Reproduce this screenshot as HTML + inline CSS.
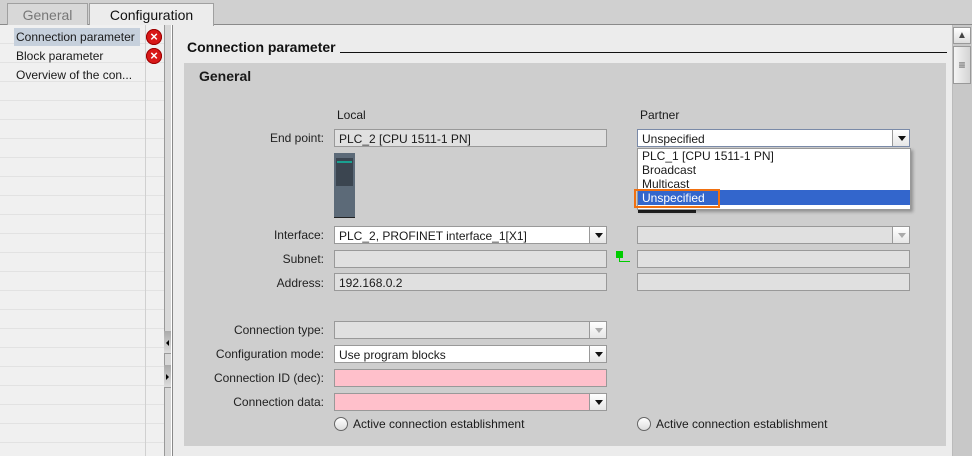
<!DOCTYPE html>
<html><head><style>
*{margin:0;padding:0;box-sizing:border-box}
body{width:972px;height:456px;overflow:hidden;background:#ececec;font-family:"Liberation Sans",sans-serif;font-size:12px;color:#1a1a1a;position:relative}
.a{position:absolute}
.tabbar{left:0;top:0;width:972px;height:25px;background:#d0d0d0;border-bottom:1px solid #8a8a8a}
.tab{top:3px;height:22px;border:1px solid #a0a0a0;border-bottom:none;font-size:14px;padding-top:3px;text-align:center}
.nav{left:0;top:25px;width:164px;height:431px;background:repeating-linear-gradient(#f0f0f0 0 18px,#e2e2e2 18px 19px);}
.lbl{text-align:right;font-size:12px;color:#222}
.box{height:18px;border:1px solid #999;background:#e0e0e0;padding:2px 4px;font-size:12px;white-space:nowrap;overflow:hidden}
.w{background:#fff}
.pink{background:#ffc0cb}
.dd{position:absolute;right:0;top:0;width:17px;height:16px;border-left:1px solid #999;background:linear-gradient(#fff,#e6e6e6)}
.dd:after{content:"";position:absolute;left:5px;top:6px;border-left:4px solid transparent;border-right:4px solid transparent;border-top:5px solid #111}
.dd.g:after{border-top-color:#aaa}
.x{width:16px;height:16px;border-radius:50%;background:#d81818;color:#fff;font-weight:bold;font-size:13px;line-height:16px;text-align:center;box-shadow:inset 0 0 0 1px #900}
.radio{width:14px;height:14px;border-radius:50%;border:1px solid #666;background:linear-gradient(#fff,#ddd)}
</style></head><body>
<div class="a tabbar"></div>
<div class="a tab" style="left:7px;width:81px;background:#d8d8d8;color:#777">General</div>
<div class="a tab" style="left:89px;width:125px;background:#ececec;color:#111;height:23px">Configuration</div>

<div class="a nav"></div>
<div class="a" style="left:145px;top:25px;width:1px;height:431px;background:#d0d0d0"></div>
<div class="a" style="left:14px;top:28px;width:126px;height:18px;background:#c6d0dc"></div>
<div class="a" style="left:16px;top:30px">Connection parameter</div>
<div class="a" style="left:16px;top:49px">Block parameter</div>
<div class="a" style="left:16px;top:68px">Overview of the con...</div>
<div class="a x" style="left:146px;top:29px">×</div>
<div class="a x" style="left:146px;top:48px">×</div>

<div class="a" style="left:164px;top:25px;width:7px;height:431px;background:#d8d8d8;border-left:1px solid #999"></div>
<div class="a" style="left:164px;top:331px;width:7px;height:23px;background:linear-gradient(#aaa,#ddd);border-bottom:1px solid #999"></div>
<div class="a" style="left:164px;top:365px;width:7px;height:23px;background:linear-gradient(#aaa,#ddd);border-bottom:1px solid #999"></div>
<div class="a" style="left:166px;top:340px;border-top:3px solid transparent;border-bottom:3px solid transparent;border-right:3px solid #000"></div>
<div class="a" style="left:166px;top:374px;border-top:3px solid transparent;border-bottom:3px solid transparent;border-left:3px solid #000"></div>
<div class="a" style="left:171px;top:25px;width:1px;height:431px;background:#fff"></div>
<div class="a" style="left:172px;top:25px;width:1px;height:431px;background:#888"></div>

<div class="a" style="left:187px;top:39px;font-size:14px;font-weight:bold;color:#111">Connection parameter</div>
<div class="a" style="left:340px;top:52px;width:607px;height:1px;background:#111"></div>
<div class="a" style="left:184px;top:63px;width:762px;height:383px;background:#cecece"></div>
<div class="a" style="left:199px;top:68px;font-size:14px;font-weight:bold">General</div>

<div class="a" style="left:337px;top:108px">Local</div>
<div class="a" style="left:640px;top:108px">Partner</div>

<div class="a lbl" style="left:190px;width:134px;top:131px">End point:</div>
<div class="a box" style="left:334px;top:129px;width:273px">PLC_2 [CPU 1511-1 PN]</div>
<div class="a box w" style="left:637px;top:129px;width:273px;border-color:#7a8aa8">Unspecified<div class="dd"></div></div>

<div class="a" style="left:334px;top:153px;width:21px;height:65px;background:#5c6a78;border-bottom:1px solid #222"></div>
<div class="a" style="left:336px;top:158px;width:17px;height:28px;background:#3b4550"></div>
<div class="a" style="left:337px;top:161px;width:15px;height:2px;background:#1aa090"></div>
<div class="a" style="left:638px;top:206px;width:58px;height:7px;background:#222"></div>

<div class="a" style="left:637px;top:148px;width:274px;height:62px;background:#fff;border:1px solid #999;box-shadow:2px 2px 3px rgba(0,0,0,.3)"></div>
<div class="a" style="left:642px;top:149px">PLC_1 [CPU 1511-1 PN]</div>
<div class="a" style="left:642px;top:163px">Broadcast</div>
<div class="a" style="left:642px;top:177px">Multicast</div>
<div class="a" style="left:638px;top:190px;width:272px;height:15px;background:#3366cc"></div>
<div class="a" style="left:642px;top:191px;color:#fff">Unspecified</div>
<div class="a" style="left:634px;top:189px;width:86px;height:19px;border:2px solid #f07010"></div>

<div class="a lbl" style="left:190px;width:134px;top:228px">Interface:</div>
<div class="a box w" style="left:334px;top:226px;width:273px">PLC_2, PROFINET interface_1[X1]<div class="dd"></div></div>
<div class="a box" style="left:637px;top:226px;width:273px"><div class="dd g"></div></div>
<div class="a lbl" style="left:190px;width:134px;top:252px">Subnet:</div>
<div class="a box" style="left:334px;top:250px;width:273px"></div>
<div class="a" style="left:616px;top:251px;width:7px;height:7px;background:#0c0"></div>
<div class="a" style="left:619px;top:258px;width:1px;height:4px;background:#0c0"></div>
<div class="a" style="left:619px;top:261px;width:11px;height:1px;background:#0c0"></div>
<div class="a box" style="left:637px;top:250px;width:273px"></div>
<div class="a lbl" style="left:190px;width:134px;top:276px">Address:</div>
<div class="a box" style="left:334px;top:273px;width:273px">192.168.0.2</div>
<div class="a box" style="left:637px;top:273px;width:273px"></div>

<div class="a lbl" style="left:190px;width:134px;top:323px">Connection type:</div>
<div class="a box" style="left:334px;top:321px;width:273px"><div class="dd g"></div></div>
<div class="a lbl" style="left:190px;width:134px;top:347px">Configuration mode:</div>
<div class="a box w" style="left:334px;top:345px;width:273px">Use program blocks<div class="dd"></div></div>
<div class="a lbl" style="left:190px;width:134px;top:371px">Connection ID (dec):</div>
<div class="a box pink" style="left:334px;top:369px;width:273px"></div>
<div class="a lbl" style="left:190px;width:134px;top:395px">Connection data:</div>
<div class="a box pink" style="left:334px;top:393px;width:273px"><div class="dd"></div></div>
<div class="a radio" style="left:334px;top:417px"></div>
<div class="a" style="left:353px;top:417px">Active connection establishment</div>
<div class="a radio" style="left:637px;top:417px"></div>
<div class="a" style="left:656px;top:417px">Active connection establishment</div>

<div class="a" style="left:952px;top:25px;width:20px;height:431px;background:#c8c8c8;border-left:1px solid #bbb"></div>
<div class="a" style="left:953px;top:27px;width:18px;height:17px;background:linear-gradient(#fff,#ddd);border:1px solid #999;text-align:center;font-size:10px;line-height:15px;color:#444">▲</div>
<div class="a" style="left:953px;top:46px;width:18px;height:38px;background:linear-gradient(90deg,#f4f4f4,#d4d4d4);border:1px solid #999;text-align:center;line-height:36px;color:#555;font-size:12px">≡</div>
</body></html>
